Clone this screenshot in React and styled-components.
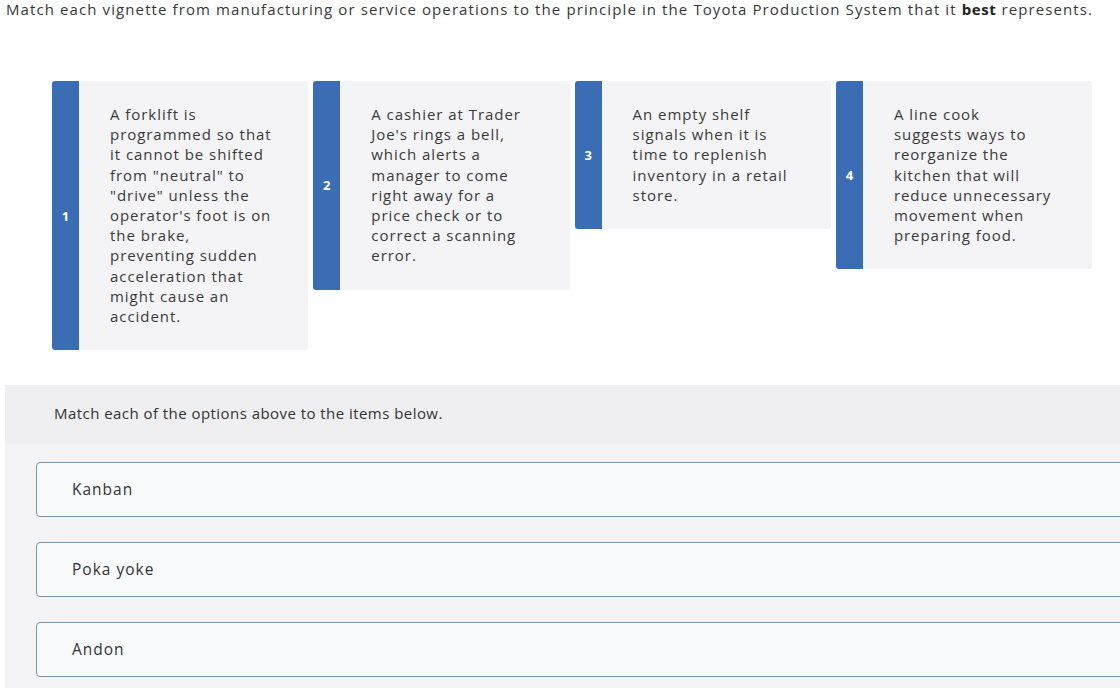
import React from "react";
import styled, { createGlobalStyle } from "styled-components";

const Global = createGlobalStyle`
  html, body { margin: 0; padding: 0; background: #ffffff; overflow: hidden; }
  body { font-family: "Open Sans", Lato, sans-serif; color: #333; }
`;

const Page = styled.div`
  width: 1120px;
  height: 688px;
  overflow: hidden;
`;

const Prompt = styled.p`
  margin: 0;
  padding-left: 6px;
  font-size: 15px;
  line-height: 19px;
  letter-spacing: 1.1px;
  color: #383838;
  white-space: nowrap;
  b { font-weight: 700; color: #222; letter-spacing: 0.6px; }
`;

const Cards = styled.div`
  display: flex;
  align-items: flex-start;
  gap: 5px;
  margin: 62px 0 0 52px;
`;

const Card = styled.div`
  display: flex;
  width: 256.3px;
  background: #f4f4f6;
  border-radius: 3px;
  overflow: hidden;
`;

const Bar = styled.div`
  flex: 0 0 27px;
  background: #3b6db5;
  color: #fff;
  font-weight: 700;
  font-size: 13px;
  display: flex;
  align-items: center;
  justify-content: center;
`;

const CardText = styled.div`
  padding: 23px 10px 24px 31px;
  font-size: 15px;
  line-height: 20.2px;
  letter-spacing: 0.95px;
  color: #3a3a3a;
  white-space: nowrap;
`;

const Line = styled.span`
  display: block;
`;

const Panel = styled.div`
  margin: 35px 0 0 5px;
  background: #f3f3f5;
  padding-bottom: 20px;
`;

const PanelHead = styled.div`
  background: #efeff1;
  height: 59px;
  padding: 18px 0 0 49px;
  box-sizing: border-box;
  font-size: 15px;
  letter-spacing: 0.45px;
  color: #333;
`;

const Slots = styled.div`
  display: flex;
  flex-direction: column;
  gap: 25px;
  padding: 18px 0 0 31px;
`;

const Slot = styled.div`
  width: 1110px;
  height: 55px;
  box-sizing: border-box;
  border: 1.5px solid #7c93ad;
  border-radius: 4px;
  background: #f9fafc;
  display: flex;
  align-items: center;
  padding: 0 0 1px 35px;
  font-size: 15.5px;
  letter-spacing: 1px;
  color: #333;
`;

const vignettes = [
  [
    "A forklift is",
    "programmed so that",
    "it cannot be shifted",
    "from \"neutral\" to",
    "\"drive\" unless the",
    "operator's foot is on",
    "the brake,",
    "preventing sudden",
    "acceleration that",
    "might cause an",
    "accident.",
  ],
  [
    "A cashier at Trader",
    "Joe's rings a bell,",
    "which alerts a",
    "manager to come",
    "right away for a",
    "price check or to",
    "correct a scanning",
    "error.",
  ],
  [
    "An empty shelf",
    "signals when it is",
    "time to replenish",
    "inventory in a retail",
    "store.",
  ],
  [
    "A line cook",
    "suggests ways to",
    "reorganize the",
    "kitchen that will",
    "reduce unnecessary",
    "movement when",
    "preparing food.",
  ],
];

const items = ["Kanban", "Poka yoke", "Andon"];

export default function App() {
  return (
    <Page>
      <Global />
      <Prompt>
        Match each vignette from manufacturing or service operations to the principle in the Toyota Production System that it <b>best</b> represents.
      </Prompt>
      <Cards>
        {vignettes.map((lines, i) => (
          <Card key={i}>
            <Bar>{i + 1}</Bar>
            <CardText>
              {lines.map((l, j) => (
                <Line key={j}>{l} </Line>
              ))}
            </CardText>
          </Card>
        ))}
      </Cards>
      <Panel>
        <PanelHead>Match each of the options above to the items below.</PanelHead>
        <Slots>
          {items.map((t) => (
            <Slot key={t}>{t}</Slot>
          ))}
        </Slots>
      </Panel>
    </Page>
  );
}
